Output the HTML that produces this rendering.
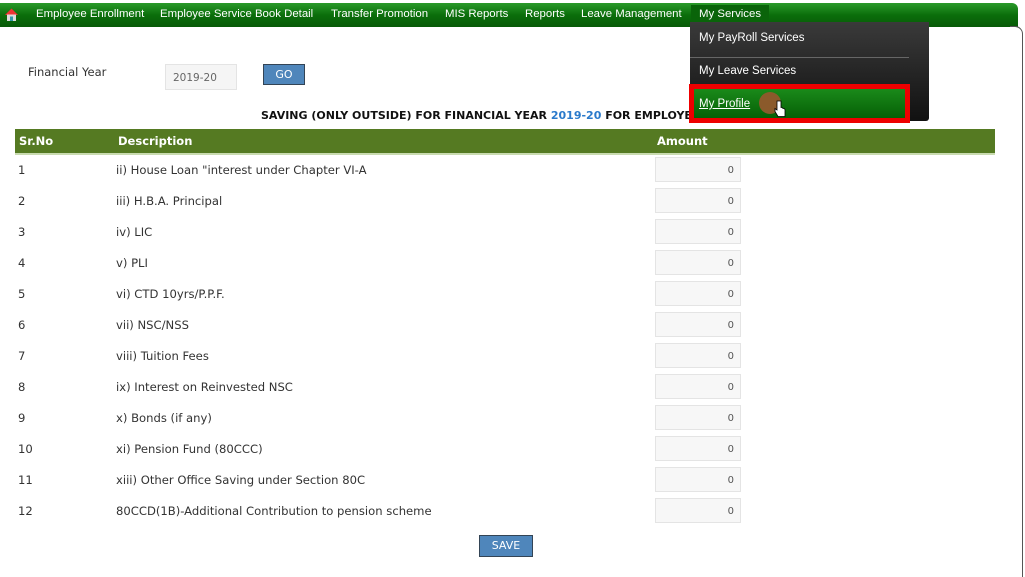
<!DOCTYPE html>
<html><head><style>
body{margin:0;width:1025px;height:570px;background:#fff;position:relative;overflow:hidden;font-family:"DejaVu Sans",Verdana,sans-serif;}
.nav{position:absolute;left:0;top:3px;width:1018px;height:24px;background:linear-gradient(#2a9a2a,#0b6e0b 50%,#075a07);border-radius:0 6px 0 0;}
.nav span{position:absolute;top:5px;color:#fff;font:11.4px "Liberation Sans",Arial,sans-serif;}
.frame{position:absolute;left:1010px;top:26px;width:12px;height:550px;border-right:1px solid #555;border-top:1px solid #555;border-radius:0 8px 0 0;}
.abs{position:absolute;}
.lbl{font-size:11px;color:#333;}
.th{position:absolute;left:15px;top:129px;width:980px;height:24px;background:#557a22;border-bottom:2px solid #c9dbb0;}
.th span{position:absolute;top:5px;color:#fff;font-weight:bold;font-size:11.5px;}
.row span{position:absolute;font-size:11.6px;color:#333;}
.inp{position:absolute;left:655px;width:86px;height:25px;border:1px solid #e4e4e4;background:#f7f7f7;font-size:10px;color:#555;text-align:right;box-sizing:border-box;padding:7px 6px 0 0;}
.dd{position:absolute;left:690px;top:22px;width:239px;height:99px;background:linear-gradient(#3a3a3a,#111);border-radius:0 0 3px 3px;}
.dd span{position:absolute;left:9px;color:#fff;font:11.5px "Liberation Sans",Arial,sans-serif;}
</style></head><body>
<div class="nav">
<svg class="abs" style="left:4px;top:4px" width="15" height="15" viewBox="0 0 15 15"><path d="M1 8 L7.5 1.5 L14 8 Z" fill="#e33"/><rect x="3" y="7.5" width="9" height="6.5" fill="#ddd"/><rect x="6" y="9.5" width="3" height="4.5" fill="#39a"/></svg>
<span style="left:36px">Employee Enrollment</span>
<span style="left:160px">Employee Service Book Detail</span>
<span style="left:331px">Transfer Promotion</span>
<span style="left:445px">MIS Reports</span>
<span style="left:525px">Reports</span>
<span style="left:581px">Leave Management</span>
<div class="abs" style="left:691px;top:2px;width:78px;height:22px;background:#0a640a"></div>
<span style="left:699px">My Services</span>
</div>
<div class="frame"></div>
<div class="abs lbl" style="left:28px;top:65px;font-size:11.5px">Financial Year</div>
<div class="abs" style="left:165px;top:64px;width:72px;height:26px;border:1px solid #e4e4e4;background:#f5f5f5;box-sizing:border-box;font-size:10.5px;color:#666;padding:7px 0 0 7px">2019-20</div>
<div class="abs" style="left:263px;top:64px;width:42px;height:21px;background:#4f86bb;border:1px solid #345;box-sizing:border-box;color:#fff;font-size:11px;text-align:center;line-height:19px">GO</div>
<div class="abs" style="left:261px;top:109px;font-size:11px;font-weight:bold;color:#111;white-space:nowrap">SAVING (ONLY OUTSIDE) FOR FINANCIAL YEAR <span style="color:#2a7acb">2019-20</span> FOR EMPLOYEE</div>
<div class="th"><span style="left:4px">Sr.No</span><span style="left:103px">Description</span><span style="left:642px">Amount</span></div>
<div class="row">
<span style="left:18px;top:163px">1</span><span style="left:116px;top:163px">ii) House Loan "interest under Chapter VI-A</span>
<span style="left:18px;top:194px">2</span><span style="left:116px;top:194px">iii) H.B.A. Principal</span>
<span style="left:18px;top:225px">3</span><span style="left:116px;top:225px">iv) LIC</span>
<span style="left:18px;top:256px">4</span><span style="left:116px;top:256px">v) PLI</span>
<span style="left:18px;top:287px">5</span><span style="left:116px;top:287px">vi) CTD 10yrs/P.P.F.</span>
<span style="left:18px;top:318px">6</span><span style="left:116px;top:318px">vii) NSC/NSS</span>
<span style="left:18px;top:349px">7</span><span style="left:116px;top:349px">viii) Tuition Fees</span>
<span style="left:18px;top:380px">8</span><span style="left:116px;top:380px">ix) Interest on Reinvested NSC</span>
<span style="left:18px;top:411px">9</span><span style="left:116px;top:411px">x) Bonds (if any)</span>
<span style="left:18px;top:442px">10</span><span style="left:116px;top:442px">xi) Pension Fund (80CCC)</span>
<span style="left:18px;top:473px">11</span><span style="left:116px;top:473px">xiii) Other Office Saving under Section 80C</span>
<span style="left:18px;top:504px">12</span><span style="left:116px;top:504px">80CCD(1B)-Additional Contribution to pension scheme</span>
</div>
<div class="inp" style="top:157px">0</div><div class="inp" style="top:188px">0</div><div class="inp" style="top:219px">0</div><div class="inp" style="top:250px">0</div><div class="inp" style="top:281px">0</div><div class="inp" style="top:312px">0</div><div class="inp" style="top:343px">0</div><div class="inp" style="top:374px">0</div><div class="inp" style="top:405px">0</div><div class="inp" style="top:436px">0</div><div class="inp" style="top:467px">0</div><div class="inp" style="top:498px">0</div>
<div class="abs" style="left:479px;top:535px;width:54px;height:22px;background:#4f86bb;border:1px solid #345;box-sizing:border-box;color:#fff;font-size:11px;text-align:center;line-height:20px">SAVE</div>
<div class="dd">
<span style="top:10px">My PayRoll Services</span>
<div class="abs" style="left:0;top:35px;width:219px;height:1px;background:#666"></div>
<span style="top:43px">My Leave Services</span>
</div>
<div class="abs" style="left:689px;top:84px;width:221px;height:39px;background:#e00"></div>
<div class="abs" style="left:694px;top:89px;width:211px;height:29px;background:linear-gradient(#1a8a1a,#066006)"></div>
<div class="abs" style="left:759px;top:92px;width:22px;height:22px;border-radius:50%;background:#8b5a2b"></div>
<span class="abs" style="left:699px;top:98px;color:#fff;font:11.5px 'Liberation Sans',Arial,sans-serif;text-decoration:underline">My Profile</span>
<svg class="abs" style="left:774px;top:100px" width="12" height="18" viewBox="0 0 12 18"><path d="M3 1v9l-2-1.5v3l3 5h7v-7l-1-1-1 0-1-1-1 0V1z" fill="#fff" stroke="#000" stroke-width="0.8"/></svg>
</body></html>
